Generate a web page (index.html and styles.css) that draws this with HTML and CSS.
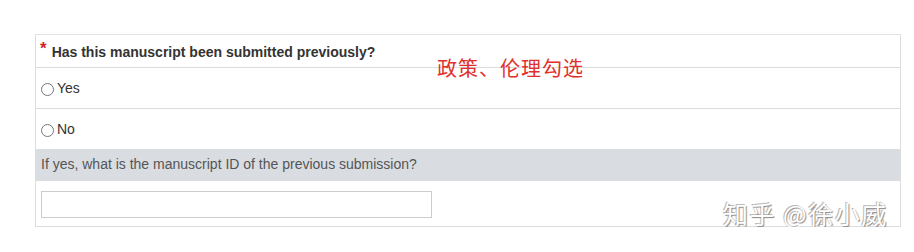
FILE: index.html
```html
<!DOCTYPE html>
<html lang="en">
<head>
    <meta charset="UTF-8">
    <title>Previous Submission</title>
    <link rel="stylesheet" href="styles.css">
</head>
<body>
    <div class="form-box">
        <div class="question">
            <span class="req">*</span>Has this manuscript been submitted previously?
        </div>
        <label class="option"><input type="radio" name="prev" class="radio"> Yes</label>
        <label class="option"><input type="radio" name="prev" class="radio"> No</label>
        <div class="sub-label">If yes, what is the manuscript ID of the previous submission?</div>
        <div class="input-row">
            <input type="text" class="id-input">
        </div>
        <div class="note">政策、伦理勾选</div>
        <div class="watermark">知乎 @徐小威</div>
    </div>
</body>
</html>
```

FILE: styles.css
```css
body { margin: 0; background: #fff; font-family: Arial, "Liberation Sans", sans-serif; font-size: 14px; color: #333; }
.form-box { position: relative; box-sizing: border-box; width: 866px; margin: 34px 0 0 35px; border: 1px solid #dcdcdc; border-top-color: #e4e4e4; }
.question { height: 32px; line-height: 34px; padding-left: 4px; font-weight: bold; color: #333; border-bottom: 1px solid #dcdcdc; }
.req { color: #d21f1f; font-size: 17px; position: relative; top: -3px; margin-right: 5px; }
.option { display: flex; align-items: center; height: 40px; padding-left: 5px; border-bottom: 1px solid #dcdcdc; color: #333; }
.radio { appearance: none; -webkit-appearance: none; width: 13px; height: 13px; margin: 2px 3px 0 0; border: 1px solid #777; border-radius: 50%; background: #fff; box-sizing: border-box; }
.sub-label { height: 32px; line-height: 31px; padding-left: 5px; margin-top: -1px; background: #d9dde2; color: #555; }
.input-row { height: 45px; padding: 10px 0 0 5px; box-sizing: border-box; }
.id-input { display: block; width: 391px; height: 27px; box-sizing: border-box; border: 1px solid #ccc; margin: 0; }
.note { position: absolute; left: 401px; top: 19px; font-size: 20px; color: #e0302b; font-family: "Noto Sans CJK SC", sans-serif; letter-spacing: 1px; line-height: 28px; }
.watermark { position: absolute; left: 687px; top: 160px; font-size: 25px; color: #fff; font-family: "Noto Sans CJK SC", sans-serif; text-shadow: 1px 1px 1px #888, -1px -1px 0 #bbb; letter-spacing: 1.5px; }
```
